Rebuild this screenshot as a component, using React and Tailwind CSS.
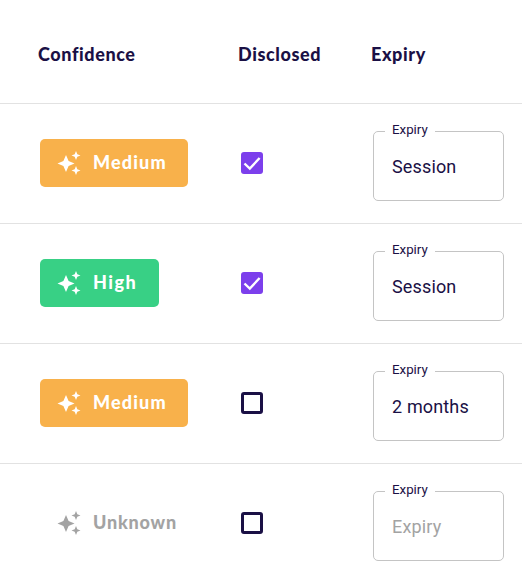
const rows = [
  { level: 'Medium', checked: true, expiry: 'Session' },
  { level: 'High', checked: true, expiry: 'Session' },
  { level: 'Medium', checked: false, expiry: '2 months' },
  { level: 'Unknown', checked: false, expiry: '' },
]

function Sparkles({ className }) {
  return (
    <svg viewBox="0 0 24 24" className={className} fill="currentColor">
      <path d="M9 4 11.6 9.9 17.5 12.5 11.6 15.1 9 21 6.4 15.1 0.5 12.5 6.4 9.9Z" />
      <path d="M19 0 20.3 3.2 23.5 4.5 20.3 5.8 19 9 17.7 5.8 14.5 4.5 17.7 3.2Z" />
      <path d="M19 15 20.3 18.2 23.5 19.5 20.3 20.8 19 24 17.7 20.8 14.5 19.5 17.7 18.2Z" />
    </svg>
  )
}

function Chip({ level }) {
  if (level === 'Unknown') {
    return (
      <div className="flex h-12 items-center gap-3 pl-[17px] pr-[22px] text-[#a3a3a3]">
        <Sparkles className="h-6 w-6 shrink-0" />
        <span className="text-[18px] font-black tracking-[0.8px]">Unknown</span>
      </div>
    )
  }
  const color = level === 'High' ? 'bg-[#38d085] w-[119px]' : 'bg-[#f8b14b] w-[148px]'
  const spacing = level === 'High' ? 'tracking-[1.5px]' : 'tracking-[1.15px]'
  return (
    <div className={`flex h-12 items-center gap-3 rounded-[5px] pl-[17px] text-white ${color}`}>
      <Sparkles className="h-6 w-6 shrink-0" />
      <span className={`text-[18px] font-black ${spacing}`}>{level}</span>
    </div>
  )
}

function Checkbox({ checked }) {
  if (checked) {
    return (
      <div className="flex h-[22px] w-[22px] items-center justify-center rounded-[3px] bg-[#7c3fec]">
        <svg viewBox="0 0 22 22" className="h-[22px] w-[22px]" fill="none" stroke="white" strokeWidth="2.4">
          <path d="M3.5 11.5 8.8 16.6 18.6 6" />
        </svg>
      </div>
    )
  }
  return <div className="h-[22px] w-[22px] rounded-[3px] border-[3px] border-[#1a1045]" />
}

function ExpiryField({ value }) {
  return (
    <fieldset className="mb-[1px] h-[78px] w-[131px] rounded-[5px] border border-[#c4c4c4] pl-[11px] pr-3">
      <legend className="px-[7px] pb-[2px] text-[13.3px] leading-[14px] text-[#1a1045]">Expiry</legend>
      <div className={`pl-[7px] pt-[16px] text-[18px] leading-[24px] tracking-[0.15px] ${value ? 'text-[#1a1045]' : 'text-[#a3a3a3]'}`}>
        {value || 'Expiry'}
      </div>
    </fieldset>
  )
}

export default function App() {
  return (
    <div className="h-[581px] w-[522px] overflow-hidden bg-white font-['Roboto',sans-serif]">
      <div className="flex h-[104px] border-b border-[#e2e2e2] pt-[42px] font-['Lato',sans-serif] text-[18px] font-black leading-[24px] tracking-[0.6px] text-[#1a1045]">
        <div className="w-[238px] pl-[38px]">Confidence</div>
        <div className="w-[133px]">Disclosed</div>
        <div>Expiry</div>
      </div>
      {rows.map((row, i) => (
        <div key={i} className="flex h-[120px] items-center border-b border-[#e2e2e2] pb-[2px] font-['Lato',sans-serif]">
          <div className="flex w-[241px] pl-10">
            <Chip level={row.level} />
          </div>
          <div className="w-[132px]">
            <Checkbox checked={row.checked} />
          </div>
          <div className="font-['Roboto',sans-serif]">
            <ExpiryField value={row.expiry} />
          </div>
        </div>
      ))}
    </div>
  )
}
